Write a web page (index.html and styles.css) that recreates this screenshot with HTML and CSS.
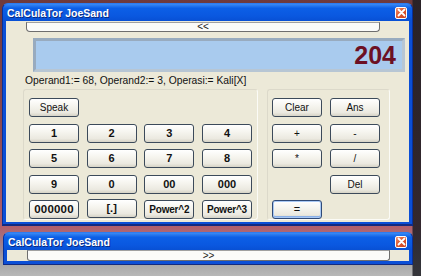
FILE: index.html
```html
<!DOCTYPE html>
<html>
<head>
<meta charset="utf-8">
<link rel="stylesheet" href="styles.css">
</head>
<body>
<div class="desktop">
  <div class="win win1">
    <div class="titlebar">
      <span class="title">CalCulaTor JoeSand</span>
      <span class="close"><svg width="9" height="9" viewBox="0 0 9 9"><path d="M1.5 1.5 L7.5 7.5 M7.5 1.5 L1.5 7.5" stroke="#fff" stroke-width="1.8" stroke-linecap="round"/></svg></span>
    </div>
    <div class="client">
      <div class="navbar">&lt;&lt;</div>
      <div class="display">204</div>
      <div class="info">Operand1:= 68, Operand2:= 3, Operasi:= Kali[X]</div>
      <div class="groups">
        <div class="group group-left">
          <button class="btn normal">Speak</button>
          <span class="slot"></span><span class="slot"></span><span class="slot"></span>
          <button class="btn">1</button>
          <button class="btn">2</button>
          <button class="btn">3</button>
          <button class="btn">4</button>
          <button class="btn">5</button>
          <button class="btn">6</button>
          <button class="btn">7</button>
          <button class="btn">8</button>
          <button class="btn">9</button>
          <button class="btn">0</button>
          <button class="btn">00</button>
          <button class="btn">000</button>
          <button class="btn wide">000000</button>
          <button class="btn raised">[.]</button>
          <button class="btn small">Power^2</button>
          <button class="btn small">Power^3</button>
        </div>
        <div class="group group-right">
          <button class="btn normal">Clear</button>
          <button class="btn normal">Ans</button>
          <button class="btn normal">+</button>
          <button class="btn normal">-</button>
          <button class="btn normal">*</button>
          <button class="btn normal">/</button>
          <span class="slot"></span>
          <button class="btn normal">Del</button>
          <button class="btn normal default">=</button>
        </div>
      </div>
    </div>
  </div>
  <div class="win win2">
    <div class="titlebar tall">
      <span class="title">CalCulaTor JoeSand</span>
      <span class="close"><svg width="9" height="9" viewBox="0 0 9 9"><path d="M1.5 1.5 L7.5 7.5 M7.5 1.5 L1.5 7.5" stroke="#fff" stroke-width="1.8" stroke-linecap="round"/></svg></span>
    </div>
    <div class="client2">
      <div class="navbar2">&gt;&gt;</div>
    </div>
  </div>
</div>
</body>
</html>
```

FILE: styles.css
```css
html, body {
  margin: 0;
  padding: 0;
}
body {
  width: 421px;
  height: 276px;
  overflow: hidden;
  font-family: "Liberation Sans", Arial, sans-serif;
}
.desktop {
  width: 421px;
  height: 276px;
  display: flex;
  flex-direction: column;
  background:
    linear-gradient(to right, rgba(0,0,0,0) 0, rgba(0,0,0,0) 412px, rgba(30,30,36,0.85) 413px),
    linear-gradient(to bottom, #6e3a3c 0, #8a4a50 120px, #b0606c 228px, #9a8a96 250px, #a8a8a8 265px, #b8b8b8 276px);
}
.win {
  box-sizing: border-box;
  background: #0b4fd6;
  border: 1px solid #08309a;
  border-top-color: #2d7cf0;
  padding: 0 3px 3px 3px;
  border-radius: 6px 6px 0 0;
}
.win1 {
  margin: 3px 0 0 2px;
  width: 411px;
  height: 223px;
  display: flex;
  flex-direction: column;
  border-bottom: 2px solid #122a80;
  padding-bottom: 2px;
}
.titlebar {
  height: 17px;
  display: flex;
  align-items: center;
  justify-content: space-between;
  background: linear-gradient(to bottom, #3a8af5 0, #0c5fe6 25%, #0a58e0 70%, #0850d4 100%);
  margin: 0 -3px;
  padding: 0 4px 0 4px;
  border-radius: 5px 5px 0 0;
}
.titlebar.tall {
  height: 18px;
}
.title {
  color: #fff;
  font-weight: bold;
  font-size: 10.5px;
  text-shadow: 1px 1px 0 #0a2a80;
}
.close {
  width: 12px;
  height: 12px;
  box-sizing: border-box;
  border: 1px solid #fff;
  border-radius: 2px;
  background: linear-gradient(135deg, #f09070 0, #e05a30 45%, #c84020 100%);
  display: flex;
  align-items: center;
  justify-content: center;
  margin-right: 1px;
}
.client {
  flex: 1;
  background: #ece9d8;
  display: flex;
  flex-direction: column;
}
.navbar {
  box-sizing: border-box;
  margin: 1px 0 0 20px;
  width: 354px;
  height: 10px;
  background: #fbfbf9;
  border: 1px solid #6e6e6e;
  border-top-color: #a0a0a0;
  border-radius: 0 0 4px 4px;
  font-size: 10px;
  line-height: 8px;
  text-align: center;
  color: #222;
}
.display {
  box-sizing: border-box;
  margin: 6px 0 0 27px;
  width: 372px;
  height: 34px;
  background: #a9cbee;
  border: 3px solid #98abbf;
  border-right-color: #b7c6d4;
  border-bottom-color: #b7c6d4;
  color: #6c1024;
  font-weight: bold;
  font-size: 25px;
  line-height: 28px;
  text-align: right;
  padding-right: 6px;
}
.info {
  margin: 2px 0 0 19px;
  height: 13px;
  font-size: 10.3px;
  line-height: 13px;
  color: #111;
}
.groups {
  display: flex;
  margin: 2px 0 0 17px;
  gap: 9px;
}
.group {
  box-sizing: border-box;
  height: 131px;
  border: 1px solid #dcd9ca;
  border-right-color: #fbfbf6;
  border-bottom-color: #fbfbf6;
  border-radius: 3px;
  display: grid;
  grid-auto-rows: 19px;
  row-gap: 6.5px;
  align-content: start;
  padding-top: 8px;
}
.group-left {
  width: 235px;
  padding-left: 5px;
  grid-template-columns: repeat(4, 50px);
  column-gap: 7.67px;
}
.group-right {
  width: 123px;
  padding-left: 4px;
  grid-template-columns: repeat(2, 50px);
  column-gap: 8px;
}
.btn {
  box-sizing: border-box;
  width: 50px;
  height: 19px;
  margin: 0;
  padding: 0;
  border: 1px solid #3c4a5a;
  border-radius: 3px;
  background: linear-gradient(to bottom, #ffffff 0, #f6f5ef 40%, #ebe9e0 80%, #d6d3c6 100%);
  font-family: "Liberation Sans", Arial, sans-serif;
  font-weight: bold;
  font-size: 11px;
  color: #111;
  line-height: 17px;
  text-align: center;
}
.btn.normal {
  font-weight: normal;
  font-size: 10px;
}
.btn.small {
  font-size: 10px;
  letter-spacing: -0.2px;
}
.btn.wide {
  font-size: 11.5px;
  letter-spacing: 0.2px;
}
.btn.raised {
  transform: translateY(-1px);
}
.btn.default {
  border-color: #2f4a78;
  box-shadow: inset 0 0 0 1px #a8c8f4, inset 0 -1px 0 1px #8ab0e8;
  font-size: 11px;
}
.win2 {
  margin: 6px 0 0 3px;
  width: 410px;
  height: 33px;
  display: flex;
  flex-direction: column;
  border-bottom: 1px solid #122a80;
}
.client2 {
  height: 11px;
  background: #ece9d8;
  padding: 0 19px 0 20px;
}
.navbar2 {
  box-sizing: border-box;
  height: 11px;
  background: #fbfbf9;
  border: 1px solid #6e6e6e;
  border-top-color: #a0a0a0;
  border-radius: 0 0 3px 3px;
  font-size: 10px;
  line-height: 9px;
  text-align: center;
  color: #222;
}
```
